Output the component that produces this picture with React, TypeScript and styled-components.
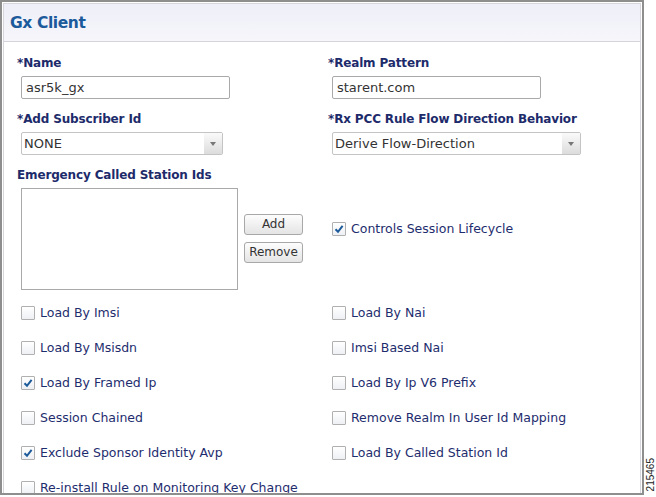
import React from "react";
import styled, { createGlobalStyle } from "styled-components";

const Global = createGlobalStyle`
  html, body { margin: 0; padding: 0; background: #fff; }
  body { font-family: "DejaVu Sans", Verdana, sans-serif; }
`;

const Page = styled.div`
  display: flex;
  width: 656px;
  height: 497px;
  overflow: hidden;
`;

const Frame = styled.div`
  box-sizing: border-box;
  width: 644px;
  height: 495px;
  border: 2px solid #8e8e8e;
  padding: 1px;
  overflow: hidden;
  flex: none;
`;

const Panel = styled.div`
  box-sizing: border-box;
  border: 1px solid #d6d6dc;
  border-bottom: none;
  height: 600px;
`;

const Header = styled.div`
  height: 37px;
  display: flex;
  align-items: center;
  padding-left: 6px;
  background: linear-gradient(#eeeef8, #f6f6fb);
  border-bottom: 1px solid #d4d4da;
`;

const Title = styled.h1`
  margin: 0;
  font-family: "DejaVu Sans", Verdana, sans-serif;
  font-size: 15.5px;
  font-weight: bold;
  color: #1b5a9b;
  letter-spacing: -0.4px;
`;

const Body = styled.div`
  padding: 14px 0 0 13px;
`;

const Grid = styled.div`
  display: grid;
  grid-template-columns: 311px 1fr;
`;

const Field = styled.div`
  display: flex;
  flex-direction: column;
  margin-bottom: 13px;
`;

const Label = styled.label`
  font-size: 12px;
  line-height: 14px;
  font-weight: bold;
  color: #1d2b6b;
  margin-bottom: 6px;
  white-space: nowrap;
  letter-spacing: -0.15px;
`;

const TextInput = styled.div<{ $w: number }>`
  box-sizing: border-box;
  width: ${(p) => p.$w}px;
  height: 23px;
  margin-left: 4px;
  border: 1px solid #a9a9a9;
  border-radius: 2px;
  padding: 0 4px;
  display: flex;
  align-items: center;
  font-size: 13px;
  color: #333;
  background: #fff;
`;

const Select = styled.div<{ $w: number }>`
  box-sizing: border-box;
  width: ${(p) => p.$w}px;
  height: 23px;
  margin-left: 4px;
  border: 1px solid #c4c4c4;
  border-radius: 2px;
  display: flex;
  align-items: stretch;
  font-size: 13px;
  color: #333;
  background: #fff;
`;

const SelectText = styled.span`
  flex: 1;
  display: flex;
  align-items: center;
  padding-left: 2px;
`;

const SelectArrow = styled.span`
  width: 18px;
  display: flex;
  align-items: center;
  justify-content: center;
  background: linear-gradient(#fafafa, #dcdcdc);
  &::after {
    content: "";
    border-left: 3px solid transparent;
    border-right: 3px solid transparent;
    border-top: 4px solid #777;
  }
`;

const EmergencyRow = styled.div`
  display: grid;
  grid-template-columns: 311px 1fr;
`;

const ListRow = styled.div`
  display: flex;
  align-items: center;
  margin-left: 4px;
  gap: 6px;
`;

const ListBox = styled.div`
  box-sizing: border-box;
  width: 217px;
  height: 102px;
  border: 1px solid #a9a9a9;
  background: #fff;
`;

const Buttons = styled.div`
  display: flex;
  flex-direction: column;
  align-items: flex-start;
  gap: 7px;
  margin-top: -2px;
`;

const Button = styled.button`
  box-sizing: border-box;
  height: 21px;
  padding: 0 4px;
  min-width: 59px;
  font-family: "DejaVu Sans", Verdana, sans-serif;
  font-size: 12px;
  color: #333;
  border: 1px solid #a8a8a8;
  border-radius: 3px;
  background: linear-gradient(#fdfdfd, #e4e4e4);
`;

const SideCheck = styled.div`
  display: flex;
  align-items: flex-start;
  padding-top: 53px;
`;

const CheckGrid = styled.div`
  display: grid;
  grid-template-columns: 311px 1fr;
  grid-auto-rows: 35px;
  margin-top: 5px;
`;

const CheckItem = styled.div`
  display: flex;
  align-items: center;
  gap: 5px;
  padding-left: 4px;
  font-size: 12.5px;
  color: #1e2d6e;
  white-space: nowrap;
`;

const Box = styled.span`
  box-sizing: border-box;
  width: 14px;
  height: 14px;
  flex: none;
  border: 1px solid #b0b0b0;
  border-radius: 1px;
  background: linear-gradient(#ffffff, #eef0f4);
  display: flex;
  align-items: center;
  justify-content: center;
`;

const Side = styled.div`
  flex: 1;
  display: flex;
  align-items: flex-end;
  justify-content: center;
  padding-bottom: 6px;
`;

const FigNum = styled.span`
  writing-mode: vertical-rl;
  transform: rotate(180deg);
  font-family: "Liberation Sans", Arial, sans-serif;
  font-size: 10px;
  color: #222;
`;

const Check = ({ on }: { on?: boolean }) => (
  <Box>
    {on && (
      <svg width="10" height="10" viewBox="0 0 10 10">
        <path d="M1.5 5.2 L4 7.8 L8.6 1.8" fill="none" stroke="#1d5a9a" strokeWidth="2" />
      </svg>
    )}
  </Box>
);

const checks: [string, boolean][] = [
  ["Load By Imsi", false],
  ["Load By Nai", false],
  ["Load By Msisdn", false],
  ["Imsi Based Nai", false],
  ["Load By Framed Ip", true],
  ["Load By Ip V6 Prefix", false],
  ["Session Chained", false],
  ["Remove Realm In User Id Mapping", false],
  ["Exclude Sponsor Identity Avp", true],
  ["Load By Called Station Id", false],
  ["Re-install Rule on Monitoring Key Change", false],
];

export default function App() {
  return (
    <>
      <Global />
      <Page>
        <Frame>
          <Panel>
            <Header>
              <Title>Gx Client</Title>
            </Header>
            <Body>
              <Grid>
                <Field>
                  <Label>*Name</Label>
                  <TextInput $w={209}>asr5k_gx</TextInput>
                </Field>
                <Field>
                  <Label>*Realm Pattern</Label>
                  <TextInput $w={209}>starent.com</TextInput>
                </Field>
                <Field>
                  <Label>*Add Subscriber Id</Label>
                  <Select $w={202}>
                    <SelectText>NONE</SelectText>
                    <SelectArrow />
                  </Select>
                </Field>
                <Field>
                  <Label>*Rx PCC Rule Flow Direction Behavior</Label>
                  <Select $w={249}>
                    <SelectText>Derive Flow-Direction</SelectText>
                    <SelectArrow />
                  </Select>
                </Field>
              </Grid>
              <EmergencyRow>
                <div>
                  <Label as="div">Emergency Called Station Ids</Label>
                  <ListRow>
                    <ListBox />
                    <Buttons>
                      <Button>Add</Button>
                      <Button>Remove</Button>
                    </Buttons>
                  </ListRow>
                </div>
                <SideCheck>
                  <CheckItem>
                    <Check on />
                    Controls Session Lifecycle
                  </CheckItem>
                </SideCheck>
              </EmergencyRow>
              <CheckGrid>
                {checks.map(([t, on]) => (
                  <CheckItem key={t}>
                    <Check on={on} />
                    {t}
                  </CheckItem>
                ))}
              </CheckGrid>
            </Body>
          </Panel>
        </Frame>
        <Side>
          <FigNum>215465</FigNum>
        </Side>
      </Page>
    </>
  );
}
